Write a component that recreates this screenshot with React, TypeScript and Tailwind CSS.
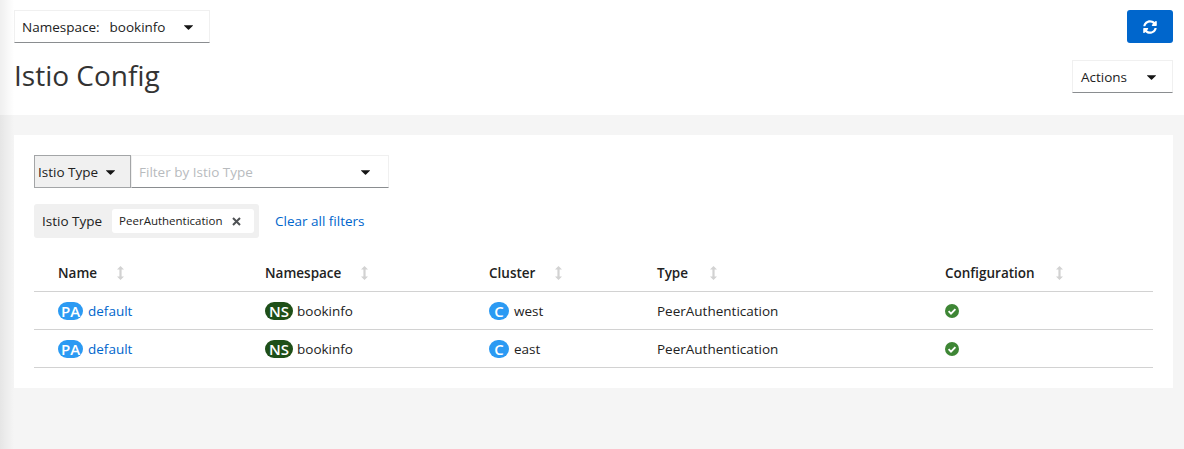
import React from "react";

const Caret = ({ className = "" }: { className?: string }) => (
  <svg className={className} width="9" height="5" viewBox="0 0 10 6" preserveAspectRatio="none" aria-hidden="true">
    <path d="M0.4 0.3h9.2c.4 0 .5.4.3.6L5.3 5.6c-.2.2-.5.2-.6 0L.1.9C-.1.7 0 .3.4.3z" fill="#151515" />
  </svg>
);

const SortIcon = () => (
  <svg width="7" height="14" viewBox="0 0 7 14" aria-hidden="true">
    <path d="M3.5 0L7 3.6H4.6v6.8H7L3.5 14 0 10.4h2.4V3.6H0z" fill="#d2d2d2" />
  </svg>
);

const Check = () => (
  <svg width="14" height="14" viewBox="0 0 14 14" aria-hidden="true">
    <circle cx="7" cy="7" r="7" fill="#3e8635" />
    <path d="M3.6 7.2l2.4 2.4 4.4-4.4" fill="none" stroke="#fff" strokeWidth="1.9" />
  </svg>
);

const Sync = () => (
  <svg width="14" height="14" viewBox="0 0 512 512" fill="#fff" aria-hidden="true">
    <path d="M370.72 133.28C339.458 104.008 298.888 87.962 255.848 88c-77.458.068-144.328 53.178-162.791 126.85-1.344 5.363-6.122 9.15-11.651 9.15H24.103c-7.498 0-13.194-6.807-11.807-14.176C33.933 94.924 134.813 8 256 8c66.448 0 126.791 26.136 171.315 68.685L463.03 40.97C478.149 25.851 504 36.559 504 57.941V192c0 13.255-10.745 24-24 24H345.941c-21.382 0-32.09-25.851-16.971-40.971l41.75-41.749zM32 296h134.059c21.382 0 32.09 25.851 16.971 40.971l-41.75 41.75c31.262 29.273 71.835 45.319 114.876 45.28 77.418-.07 144.315-53.144 162.787-126.849 1.344-5.363 6.122-9.15 11.651-9.15h57.304c7.498 0 13.194 6.807 11.807 14.176C478.067 417.076 377.187 504 256 504c-66.448 0-126.791-26.136-171.315-68.685L48.97 471.03C33.851 486.149 8 475.441 8 454.059V320c0-13.255 10.745-24 24-24z" />
  </svg>
);

const Badge = ({ label, color, width }: { label: string; color: string; width: string }) => (
  <span className={`inline-flex h-[18px] items-center justify-center rounded-full text-[15px] font-semibold text-white ${width} ${color}`}>
    {label}
  </span>
);

const Head = ({ label, gap }: { label: string; gap: string }) => (
  <div className={`flex items-center pl-6 pt-[1px] text-[13.5px] font-semibold text-[#222222] ${gap}`}>
    <span>{label}</span>
    <SortIcon />
  </div>
);

const Row = ({ cluster }: { cluster: string }) => (
  <div className="grid h-[38px] grid-cols-[207px_224px_168px_288px_1fr] items-center border-b border-[#d2d2d2] pt-[1px] text-[13.5px] text-[#222222]">
    <div className="flex items-center gap-[5px] pl-6">
      <Badge label="PA" color="bg-[#2b9af3]" width="w-[25px]" />
      <span className="text-[#0066cc]">default</span>
    </div>
    <div className="flex items-center gap-[4px] pl-6">
      <Badge label="NS" color="bg-[#1e4f18]" width="w-[28px]" />
      <span>bookinfo</span>
    </div>
    <div className="flex items-center gap-[5px] pl-6">
      <Badge label="C" color="bg-[#2b9af3]" width="w-[20px]" />
      <span>{cluster}</span>
    </div>
    <div className="pl-6">PeerAuthentication</div>
    <div className="pl-6"><Check /></div>
  </div>
);

export default function App() {
  return (
    <div className="relative h-[449px] w-[1184px] overflow-hidden bg-[#f5f5f5] text-[#222222]" style={{ fontFamily: '"Open Sans", "Noto Sans", sans-serif' }}>
      <div className="pointer-events-none absolute inset-y-0 left-0 z-10 w-[14px] bg-gradient-to-r from-[#00000010] to-transparent" />
      <header className="h-[115px] bg-white pl-[14px] pr-[11px] pt-[10px]">
        <div className="flex items-start justify-between">
          <button className="flex h-[33px] w-[196px] items-center border border-[#f0f0f0] border-b-[#8a8d90] pl-[7px] pt-[1px] text-[13.5px] text-[#222222]">
            <span>Namespace:</span>
            <span className="ml-[10px]">bookinfo</span>
            <Caret className="ml-[18px]" />
          </button>
          <button className="flex h-[33px] w-[46px] items-center justify-center rounded-[3px] bg-[#0066cc]">
            <Sync />
          </button>
        </div>
        <div className="mt-[17px] flex items-start justify-between">
          <h1 className="mt-[-2px] text-[28px] leading-[34px] font-normal text-[#333333]">Istio Config</h1>
          <button className="flex h-[33px] w-[101px] items-center border border-[#f0f0f0] border-b-[#8a8d90] pl-2 pt-[1px] text-[13.5px] text-[#222222]">
            <span>Actions</span>
            <Caret className="ml-[20px]" />
          </button>
        </div>
      </header>

      <main className="pl-[14px] pr-[11px] pt-5">
        <section className="h-[253px] bg-white px-5 pt-5">
          <div className="flex h-[33px]">
            <button className="flex h-full w-[97px] items-center border border-[#a3a5a7] bg-[#f0f0f0] pl-[3px] pt-[1px] text-[13.5px]">
              <span>Istio Type</span>
              <Caret className="ml-[8px]" />
            </button>
            <div className="flex h-full w-[258px] items-center justify-between border border-[#f0f0f0] border-b-[#8a8d90] pl-[7px] pr-[18px] pt-[1px] text-[13.5px] text-[#b8bbbe]">
              <span>Filter by Istio Type</span>
              <Caret />
            </div>
          </div>
          <div className="mt-4 flex h-[34px] items-center">
            <div className="flex h-full w-[225px] items-center rounded-[3px] bg-[#f0f0f0] pl-2 text-[13.5px]">
              <span>Istio Type</span>
              <span className="ml-[10px] flex h-[24px] w-[142px] items-center justify-between rounded-[3px] bg-white pl-[7px] pr-[13px] text-[11.5px]">
                <span>PeerAuthentication</span>
                <svg width="9" height="9" viewBox="0 0 9 9" aria-hidden="true">
                  <path d="M1 1l7 7M8 1L1 8" stroke="#4f5255" strokeWidth="2" />
                </svg>
              </span>
            </div>
            <span className="ml-4 text-[13.5px] text-[#0066cc]">Clear all filters</span>
          </div>
          <div className="mt-4">
            <div className="grid h-[38px] grid-cols-[207px_224px_168px_288px_1fr] items-center border-b border-[#d2d2d2]">
              <Head label="Name" gap="gap-[20px]" />
              <Head label="Namespace" gap="gap-[20px]" />
              <Head label="Cluster" gap="gap-[20px]" />
              <Head label="Type" gap="gap-[22px]" />
              <Head label="Configuration" gap="gap-[21px]" />
            </div>
            <Row cluster="west" />
            <Row cluster="east" />
          </div>
        </section>
      </main>
    </div>
  );
}
